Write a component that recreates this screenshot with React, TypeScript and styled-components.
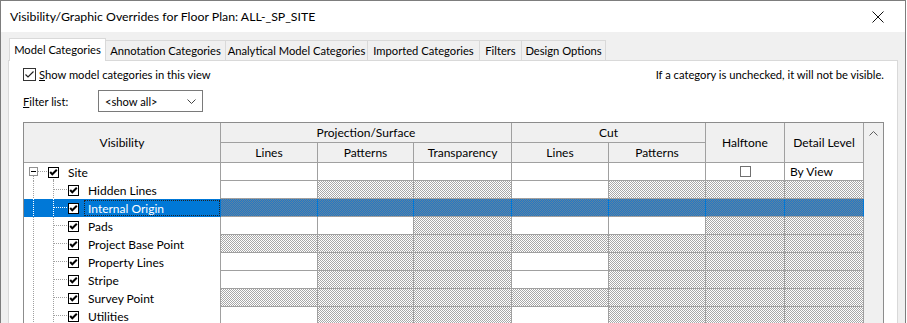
import React from 'react';
import styled, { createGlobalStyle } from 'styled-components';

const FONT = `Lato, "Liberation Sans", Arial, sans-serif`;
const GRID = '#a0a0a0';
const BLUE = '#0078d7';

// 2x2 checker tile used for greyed-out (not editable) cells
const checker = (dot: string, base: string) =>
  `url("data:image/svg+xml,%3Csvg xmlns='http://www.w3.org/2000/svg' width='2' height='2' shape-rendering='crispEdges'%3E%3Crect width='2' height='2' fill='${base.replace(
    '#',
    '%23'
  )}'/%3E%3Crect width='1' height='1' fill='${dot.replace('#', '%23')}'/%3E%3Crect x='1' y='1' width='1' height='1' fill='${dot.replace(
    '#',
    '%23'
  )}'/%3E%3C/svg%3E")`;

const GlobalStyle = createGlobalStyle`
  html, body {
    margin: 0;
    padding: 0;
    background: #fff;
    overflow: hidden;
  }
  body {
    font-family: ${FONT};
    font-size: 12px;
    color: #000;
  }
`;

const Window = styled.div`
  width: 906px;
  height: 340px;
  box-sizing: border-box;
  border: 1px solid #7d7d7d;
  border-bottom: none;
  background: #f0f0f0;
  display: flex;
  flex-direction: column;
`;

const TitleBar = styled.div`
  height: 31px;
  flex: none;
  background: #fff;
  display: flex;
  align-items: center;
  justify-content: space-between;
  padding: 0 21px 0 9px;
  font-size: 12.3px;
`;

const Body = styled.div`
  flex: 1;
  display: flex;
  flex-direction: column;
  padding: 6px 7px 0 7px;
`;

const TabStrip = styled.div`
  height: 22px;
  display: flex;
  align-items: flex-end;
  padding-left: 1px;
  font-size: 11.2px;
`;

const Tab = styled.div<{ $active?: boolean; $w: number }>`
  box-sizing: border-box;
  width: ${(p) => p.$w}px;
  height: ${(p) => (p.$active ? 23 : 20)}px;
  margin-bottom: ${(p) => (p.$active ? -1 : 0)}px;
  margin-left: -1px;
  position: relative;
  z-index: ${(p) => (p.$active ? 1 : 0)};
  background: ${(p) => (p.$active ? '#fff' : '#f0f0f0')};
  border: 1px solid #d9d9d9;
  border-bottom: none;
  display: flex;
  align-items: center;
  justify-content: center;
  white-space: nowrap;
  padding-bottom: ${(p) => (p.$active ? 2 : 0)}px;
  &:first-child {
    margin-left: 0;
  }
`;

const Panel = styled.div`
  flex: 1;
  background: #fff;
  border: 1px solid #d9d9d9;
  padding: 6px 13px 0 14px;
  display: flex;
  flex-direction: column;
`;

const OptionsRow = styled.div`
  height: 15px;
  display: flex;
  align-items: center;
  justify-content: space-between;
  font-size: 11.2px;
`;

const CheckLabel = styled.label`
  display: flex;
  align-items: center;
  gap: 3px;
`;

const FilterRow = styled.div`
  margin-top: 8px;
  height: 22px;
  display: flex;
  align-items: center;
  font-size: 11.2px;
`;

const FilterLabel = styled.span`
  width: 75px;
`;

const Select = styled.div`
  box-sizing: border-box;
  width: 105px;
  height: 22px;
  border: 1px solid #7a7a7a;
  display: flex;
  align-items: center;
  justify-content: space-between;
  padding: 0 6px 0 6px;
`;

const Table = styled.div`
  margin-top: 10px;
  border: 1px solid #8c8c8c;
  display: flex;
  align-items: flex-start;
`;

const Grid = styled.div`
  display: grid;
  grid-template-columns: 197px 97px 96px 98px 97px 97px 79px 79px;
  grid-template-rows: 20px 20px;
  grid-auto-rows: 18px;
`;

const HeadCell = styled.div<{ $col: string; $row: string }>`
  grid-column: ${(p) => p.$col};
  grid-row: ${(p) => p.$row};
  box-sizing: border-box;
  background: #f0f0f0;
  border-right: 1px solid ${GRID};
  border-bottom: 1px solid ${GRID};
  display: flex;
  align-items: center;
  justify-content: center;
`;

const TreeCell = styled.div<{ $selected?: boolean }>`
  box-sizing: border-box;
  border-right: 1px solid ${(p) => (p.$selected ? BLUE : GRID)};
  background: ${(p) => (p.$selected ? BLUE : '#fff')};
  color: ${(p) => (p.$selected ? '#fff' : '#000')};
  display: flex;
  align-items: center;
  overflow: hidden;
`;

const Cell = styled.div<{ $hatch?: boolean; $selected?: boolean; $align?: string }>`
  box-sizing: border-box;
  border-right: 1px solid ${(p) => (p.$selected ? BLUE : GRID)};
  border-bottom: 1px solid ${GRID};
  background-color: ${(p) => (p.$selected ? '#3f7cb6' : '#fff')};
  background-image: ${(p) =>
    p.$selected ? checker('#62829f', '#1f79c9') : p.$hatch ? checker('#a8a8a8', '#ffffff') : 'none'};
  background-size: 2px 2px;
  background-attachment: fixed;
  display: flex;
  align-items: center;
  justify-content: ${(p) => p.$align || 'flex-start'};
  padding-left: ${(p) => (p.$align === 'center' ? 0 : 5)}px;
`;

const NodeCheck = styled.span<{ $stem?: boolean }>`
  position: relative;
  display: flex;
  &::after {
    content: '';
    display: ${(p) => (p.$stem ? 'block' : 'none')};
    position: absolute;
    left: 5px;
    top: 12px;
    height: 6px;
    border-left: 1px dotted ${GRID};
  }
`;

const NodeLabel = styled.span<{ $focus?: boolean }>`
  flex: 1;
  margin-left: 5px;
  height: 16px;
  box-sizing: border-box;
  padding-left: 3px;
  display: flex;
  align-items: center;
  white-space: nowrap;
  border: 1px dotted ${(p) => (p.$focus ? '#222' : 'transparent')};
`;

const ScrollBar = styled.div`
  width: 19px;
  align-self: stretch;
  background: #f0f0f0;
  display: flex;
  flex-direction: column;
  align-items: center;
  padding-top: 8px;
`;

type Row = {
  name: string;
  root?: boolean;
  selected?: boolean;
  hatch: number[];
  halftone?: boolean;
  detail?: string;
};

const rows: Row[] = [
  { name: 'Site', root: true, hatch: [0, 0, 0, 0, 0, 0, 0], halftone: true, detail: 'By View' },
  { name: 'Hidden Lines', hatch: [0, 1, 1, 0, 1, 1, 1] },
  { name: 'Internal Origin', selected: true, hatch: [1, 1, 1, 1, 1, 1, 1] },
  { name: 'Pads', hatch: [0, 0, 1, 0, 0, 1, 1] },
  { name: 'Project Base Point', hatch: [1, 1, 1, 1, 1, 1, 1] },
  { name: 'Property Lines', hatch: [0, 1, 1, 0, 1, 1, 1] },
  { name: 'Stripe', hatch: [0, 1, 1, 0, 1, 1, 1] },
  { name: 'Survey Point', hatch: [1, 1, 1, 1, 1, 1, 1] },
  { name: 'Utilities', hatch: [0, 1, 1, 0, 1, 1, 1] },
];

const tabs = [
  { label: 'Model Categories', w: 97, active: true },
  { label: 'Annotation Categories', w: 121 },
  { label: 'Analytical Model Categories', w: 143 },
  { label: 'Imported Categories', w: 113 },
  { label: 'Filters', w: 43 },
  { label: 'Design Options', w: 85 },
];

const BigCheck = () => (
  <svg width="13" height="13" viewBox="0 0 13 13" shapeRendering="crispEdges">
    <rect x="0.5" y="0.5" width="12" height="12" fill="#fff" stroke="#333" />
    <polyline points="2.5,6.5 5,9 10.5,3.5" fill="none" stroke="#222" strokeWidth="1.2" shapeRendering="geometricPrecision" />
  </svg>
);

const SmallCheck = ({ checked }: { checked: boolean }) => (
  <svg width="11" height="11" viewBox="0 0 11 11" shapeRendering="crispEdges">
    <rect x="0.5" y="0.5" width="10" height="10" fill="#fff" stroke={checked ? '#000' : '#707070'} />
    {checked && (
      <polyline points="2.2,5 4.3,7.3 8.8,2.8" fill="none" stroke="#000" strokeWidth="2" shapeRendering="geometricPrecision" />
    )}
  </svg>
);

const Gutter = ({ root, color }: { root?: boolean; color: string }) =>
  root ? (
    <svg width="24" height="18" viewBox="0 0 24 18" style={{ flex: 'none' }}>
      <line x1="9.5" y1="13" x2="9.5" y2="18" stroke={color} strokeDasharray="1 1" />
      <line x1="14" y1="8.5" x2="24" y2="8.5" stroke={color} strokeDasharray="1 1" />
      <rect x="5.5" y="4.5" width="8" height="8" fill="#fff" stroke="#919191" />
      <line x1="7" y1="8.5" x2="12" y2="8.5" stroke="#000" />
    </svg>
  ) : (
    <svg width="44" height="18" viewBox="0 0 44 18" style={{ flex: 'none' }}>
      <line x1="9.5" y1="0" x2="9.5" y2="18" stroke={color} strokeDasharray="1 1" />
      <line x1="29.5" y1="0" x2="29.5" y2="18" stroke={color} strokeDasharray="1 1" />
      <line x1="30" y1="8.5" x2="44" y2="8.5" stroke={color} strokeDasharray="1 1" />
    </svg>
  );

const App: React.FC = () => {
  return (
    <>
      <GlobalStyle />
      <Window>
        <TitleBar>
          <span>Visibility/Graphic Overrides for Floor Plan: ALL-_SP_SITE</span>
          <svg width="12" height="12" viewBox="0 0 12 12">
            <path d="M0.5 0.5 L11.5 11.5 M11.5 0.5 L0.5 11.5" stroke="#111" strokeWidth="1" />
          </svg>
        </TitleBar>
        <Body>
          <TabStrip>
            {tabs.map((t) => (
              <Tab key={t.label} $w={t.w} $active={t.active}>
                {t.label}
              </Tab>
            ))}
          </TabStrip>
          <Panel>
            <OptionsRow>
              <CheckLabel>
                <BigCheck />
                <span>
                  <u>S</u>how model categories in this view
                </span>
              </CheckLabel>
              <span>If a category is unchecked, it will not be visible.</span>
            </OptionsRow>
            <FilterRow>
              <FilterLabel>
                <u>F</u>ilter list:
              </FilterLabel>
              <Select>
                <span>&lt;show all&gt;</span>
                <svg width="9" height="5" viewBox="0 0 9 5">
                  <polyline points="0.5,0.5 4.5,4.5 8.5,0.5" fill="none" stroke="#444" />
                </svg>
              </Select>
            </FilterRow>
            <Table>
              <Grid>
                <HeadCell $col="1" $row="1 / 3">Visibility</HeadCell>
                <HeadCell $col="2 / 5" $row="1">Projection/Surface</HeadCell>
                <HeadCell $col="5 / 7" $row="1">Cut</HeadCell>
                <HeadCell $col="7" $row="1 / 3">Halftone</HeadCell>
                <HeadCell $col="8" $row="1 / 3">Detail Level</HeadCell>
                <HeadCell $col="2" $row="2">Lines</HeadCell>
                <HeadCell $col="3" $row="2">Patterns</HeadCell>
                <HeadCell $col="4" $row="2">Transparency</HeadCell>
                <HeadCell $col="5" $row="2">Lines</HeadCell>
                <HeadCell $col="6" $row="2">Patterns</HeadCell>
                {rows.map((r) => (
                  <React.Fragment key={r.name}>
                    <TreeCell $selected={r.selected}>
                      <Gutter root={r.root} color={r.selected ? '#fff' : GRID} />
                      <NodeCheck $stem={r.root}>
                        <SmallCheck checked />
                      </NodeCheck>
                      <NodeLabel $focus={r.selected}>{r.name}</NodeLabel>
                    </TreeCell>
                    {r.hatch.map((h, i) => (
                      <Cell
                        key={i}
                        $hatch={!!h}
                        $selected={r.selected}
                        $align={i === 5 ? 'center' : undefined}
                      >
                        {i === 5 && r.halftone && <SmallCheck checked={false} />}
                        {i === 6 && r.detail}
                      </Cell>
                    ))}
                  </React.Fragment>
                ))}
              </Grid>
              <ScrollBar>
                <svg width="9" height="5" viewBox="0 0 9 5">
                  <polyline points="0.5,4.5 4.5,0.5 8.5,4.5" fill="none" stroke="#606060" />
                </svg>
              </ScrollBar>
            </Table>
          </Panel>
        </Body>
      </Window>
    </>
  );
};

export default App;
